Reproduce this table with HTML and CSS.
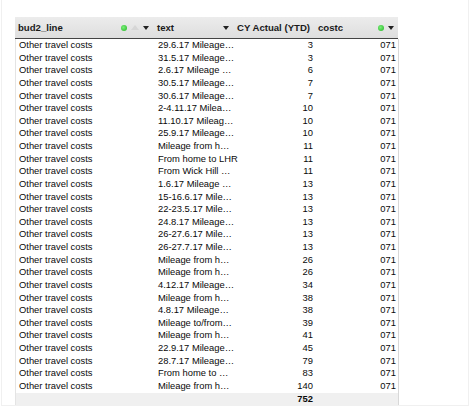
FILE: index.html
```html
<!DOCTYPE html>
<html>
<head>
<meta charset="utf-8">
<link rel="stylesheet" href="styles.css">
</head>
<body>
<div class="panel">
  <div class="grid">
    <div class="hd c1"><span class="lbl">bud2_line</span><span class="ico"><span class="dot"></span><span class="up"></span><span class="dn"></span></span></div>
    <div class="hd c2"><span class="lbl">text</span><span class="ico"><span class="dn"></span></span></div>
    <div class="hd c3"><span class="lbl">CY Actual (YTD)</span></div>
    <div class="hd c4"><span class="lbl">costc</span><span class="ico"><span class="dot"></span><span class="dn"></span></span></div>
  </div>
  <div class="body" id="body"></div>
  <div class="grid total">
    <div class="cell"></div><div class="cell"></div><div class="cell num">752</div><div class="cell"></div>
  </div>
</div>
<script src="app.js"></script>
</body>
</html>
```
FILE: app.js
```js
var rows = [
["29.6.17 Mileage...",3],["31.5.17 Mileage...",3],["2.6.17 Mileage ...",6],["30.5.17 Mileage...",7],
["30.6.17 Mileage...",7],["2-4.11.17 Milea...",10],["11.10.17 Mileag...",10],["25.9.17 Mileage...",10],
["Mileage from h...",11],["From home to LHR",11],["From Wick Hill ...",11],["1.6.17 Mileage ...",13],
["15-16.6.17 Mile...",13],["22-23.5.17 Mile...",13],["24.8.17 Mileage...",13],["26-27.6.17 Mile...",13],
["26-27.7.17 Mile...",13],["Mileage from h...",26],["Mileage from h...",26],["4.12.17 Mileage...",34],
["Mileage from h...",38],["4.8.17 Mileage...",38],["Mileage to/from...",39],["Mileage from h...",41],
["22.9.17 Mileage...",45],["28.7.17 Mileage...",79],["From home to ...",83],["Mileage from h...",140]
];
var b = document.getElementById('body');
rows.forEach(function(r){
  var d = document.createElement('div');
  d.className = 'grid row';
  d.innerHTML = '<div class="cell">Other travel costs</div><div class="cell">' + r[0].replace('...','\u2026') +
    '</div><div class="cell num">' + r[1] + '</div><div class="cell num">071</div>';
  b.appendChild(d);
});
```
FILE: styles.css
```css
html, body { margin: 0; padding: 0; background: #fff; }
body { font-family: "Liberation Sans", Arial, sans-serif; font-size: 9.4px; color: #0a0a0a; }
.panel {
  width: 468px; height: 406px; margin: 0 0 0 1px;
  border: 1px solid #f0f0f0; border-top: none;
  padding: 17px 0 0 13px; box-sizing: border-box;
}
.grid { display: grid; grid-template-columns: 138px 80px 82px 83px; width: 383px; }
.hd {
  height: 21px; display: flex; align-items: center; justify-content: space-between;
  background: linear-gradient(#ececec, #dedede);
  border-bottom: 1px solid #444; font-weight: bold; font-size: 9.6px; color: #1a1a1a;
  padding: 0 4px 0 3px; box-sizing: content-box; white-space: nowrap;
}
.hd.c2, .hd.c3 { padding-left: 4px; }
.hd.c3 { justify-content: flex-start; }
.ico { display: flex; align-items: center; gap: 4px; }
.dot { width: 6px; height: 6px; border-radius: 50%; background: radial-gradient(circle at 40% 40%, #7af07a, #22b322); }
.up { width: 0; height: 0; border-left: 4px solid transparent; border-right: 4px solid transparent; border-bottom: 5px solid #d6d6d6; }
.dn { width: 0; height: 0; border-left: 3.5px solid transparent; border-right: 3.5px solid transparent; border-top: 4px solid #222; }
.body { border-right: 1px solid #d8d8d8; width: 382px; border-left: 1px solid #e4e4e4; }
.row { height: 12.63px; line-height: 12.63px; }
.cell { padding: 0 4px 0 3px; white-space: nowrap; }
.row .cell:nth-child(2) { padding-left: 4px; }
.num { text-align: right; padding-right: 3px; }
.total { background: #f0f0f0; height: 12.5px; line-height: 12.5px; font-weight: bold; border-right: 1px solid #d8d8d8; border-left: 1px solid #e4e4e4; width: 382px; }
```
